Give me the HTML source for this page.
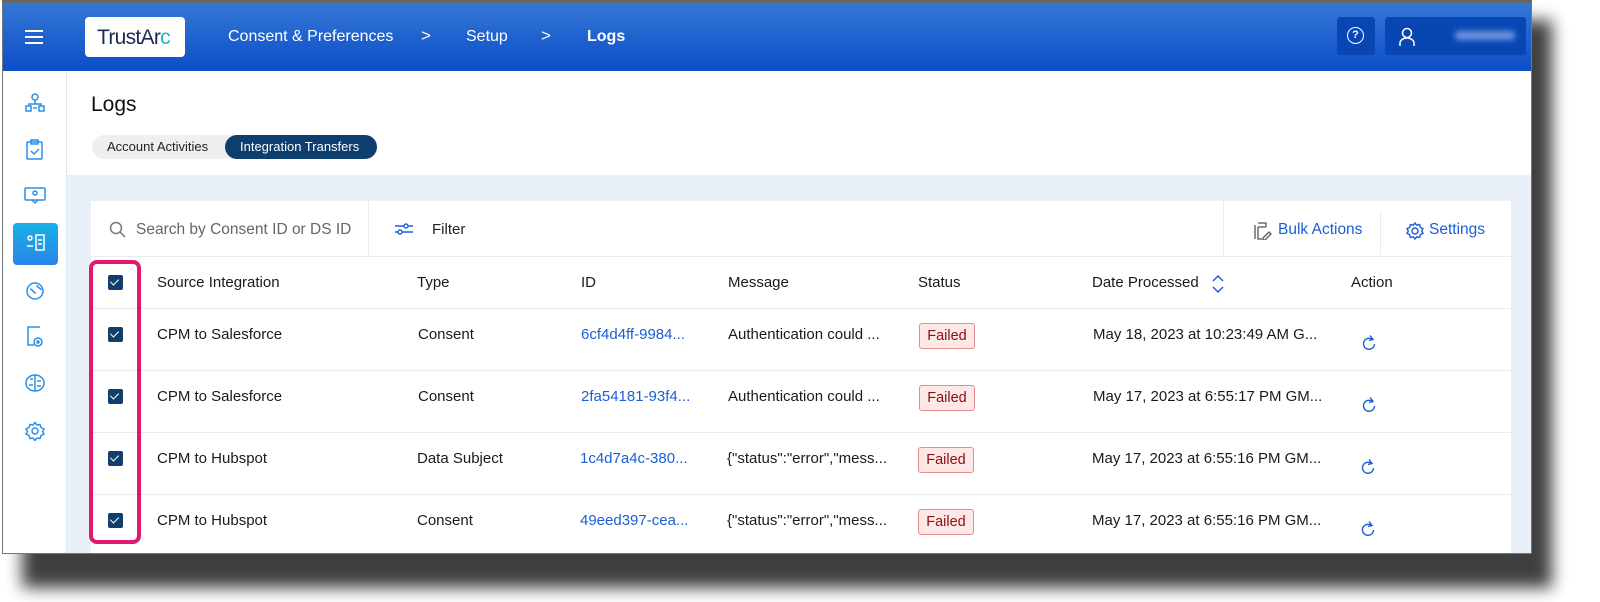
<!DOCTYPE html>
<html><head><style>
*{box-sizing:border-box;margin:0;padding:0}
body{width:1600px;height:602px;background:#fff;font-family:"Liberation Sans",sans-serif;position:relative;overflow:hidden;color:#1a1a1a}
.shadow{position:absolute;left:22px;top:20px;width:1530px;height:568px;background:#1e1e1e;filter:blur(8px);opacity:.85}
.win{position:absolute;left:2px;top:0;width:1530px;height:554px;background:#e9f0f8;overflow:hidden;border:1px solid #777;border-top:3px solid #666}
.hdr{position:absolute;left:0;top:0;width:100%;height:68px;background:linear-gradient(#3577d6,#0b4ec6)}
.t{position:absolute;white-space:nowrap}
.side{position:absolute;left:0;top:68px;width:64px;height:500px;background:#fff;border-right:1px solid #dde5ef}
.top{position:absolute;left:64px;top:68px;right:0;height:104px;background:#fff}
.card{position:absolute;left:88px;top:198px;width:1420px;height:400px;background:#fff}
.line{position:absolute;left:0;width:100%;height:1px;background:#e8ecf1}
.cb{position:absolute;width:15px;height:15px;background:#123e6b;border-radius:2px}
.cb:after{content:"";position:absolute;left:4px;top:2px;width:4px;height:7px;border:solid #fff;border-width:0 1.6px 1.6px 0;transform:rotate(45deg)}
.f{position:absolute;width:56px;height:26px;border:1px solid #e58b8b;background:#fde7e7;border-radius:3px;color:#8a1010;font-size:14.5px;text-align:center;line-height:24px}
.c{font-size:15px;color:#1a1a1a}
.ln{color:#1a5fd6}
.ic{position:absolute}
.rf{position:absolute}
</style></head><body>
<div class="shadow"></div>
<div class="win">
<div class="hdr">
 <div class="ic" style="left:22px;top:27px;width:18px;height:2px;background:#fff;box-shadow:0 6px #fff,0 12px #fff"></div>
 <div style="position:absolute;left:82px;top:14px;width:100px;height:40px;background:#fff;border-radius:4px"></div>
 <div class="t" style="left:94px;top:23px;font-size:21px;color:#1b2a55;letter-spacing:-.7px">TrustAr<span style="color:#1cb5c9">c</span></div>
 <div class="t" style="left:225px;top:25px;color:#fff;font-size:16px">Consent &amp; Preferences</div>
 <div class="t" style="left:418px;top:23px;color:#fff;font-size:17px">&gt;</div>
 <div class="t" style="left:463px;top:25px;color:#fff;font-size:16px">Setup</div>
 <div class="t" style="left:538px;top:23px;color:#fff;font-size:17px">&gt;</div>
 <div class="t" style="left:584px;top:25px;color:#fff;font-size:16px;font-weight:bold">Logs</div>
 <div style="position:absolute;left:1334px;top:14px;width:38px;height:38px;background:#0847b3;border-radius:3px"></div>
 <div style="position:absolute;left:1344px;top:24px;width:17px;height:17px;border:1.6px solid #fff;border-radius:50%;color:#fff;font-size:11px;text-align:center;line-height:14px;font-weight:bold">?</div>
 <div style="position:absolute;left:1382px;top:14px;width:141px;height:38px;background:#0847b3;border-radius:3px"></div>
 <svg class="ic" style="left:1395px;top:24px" width="18" height="20"><circle cx="9" cy="6" r="4.5" fill="none" stroke="#fff" stroke-width="1.5"/><path d="M2 19v-3a7 5 0 0 1 14 0v3" fill="none" stroke="#fff" stroke-width="1.5"/></svg>
 <div style="position:absolute;left:1452px;top:28px;width:60px;height:9px;background:#6c95e0;filter:blur(3px);border-radius:4px"></div>
</div>
<div class="side">
 <svg class="ic" style="left:22px;top:22px" width="20" height="20" fill="none" stroke="#2a8fe6" stroke-width="1.5"><circle cx="10" cy="4" r="3"/><rect x="1" y="13" width="5" height="5"/><rect x="14" y="13" width="5" height="5"/><path d="M10 7v4M4 13v-2h12v2M8 15h4"/></svg>
 <svg class="ic" style="left:22px;top:68px" width="20" height="22" fill="none" stroke="#2a8fe6" stroke-width="1.5"><rect x="2" y="3" width="15" height="17" rx="1"/><rect x="6" y="1" width="7" height="4"/><path d="M6 12l3 3 5-5"/></svg>
 <svg class="ic" style="left:21px;top:115px" width="22" height="20" fill="none" stroke="#2a8fe6" stroke-width="1.5"><rect x="1" y="2" width="20" height="12" rx="1"/><circle cx="11" cy="7" r="2"/><path d="M8 14l3 3 3-3"/></svg>
 <div style="position:absolute;left:10px;top:152px;width:45px;height:42px;background:linear-gradient(#18b0e6,#2a86e8);border-radius:4px"></div>
 <svg class="ic" style="left:23px;top:163px" width="20" height="18" fill="none" stroke="#fff" stroke-width="1.5"><circle cx="4" cy="4" r="2"/><path d="M1 12h6"/><rect x="10" y="1" width="8" height="15"/><path d="M12 6h4M12 10h4"/></svg>
 <svg class="ic" style="left:22px;top:210px" width="20" height="20" fill="none" stroke="#2a8fe6" stroke-width="1.5"><circle cx="10" cy="10" r="8"/><path d="M5 8c3 0 3 4 6 4M12 4c0 3 4 3 4 5"/></svg>
 <svg class="ic" style="left:23px;top:255px" width="18" height="22" fill="none" stroke="#2a8fe6" stroke-width="1.5"><path d="M14 1H2v18h6"/><circle cx="12" cy="16" r="4"/><circle cx="12" cy="16" r="1"/></svg>
 <svg class="ic" style="left:22px;top:302px" width="20" height="20" fill="none" stroke="#2a8fe6" stroke-width="1.5"><ellipse cx="10" cy="10" rx="9" ry="8"/><path d="M10 2v16M5 6h3M12 8h4M4 12h4M12 13h4"/></svg>
 <svg class="ic" style="left:22px;top:350px" width="20" height="20" fill="none" stroke="#2a8fe6" stroke-width="1.5"><circle cx="10" cy="10" r="3"/><path d="M10 1.5l2 2.5 3-.5 1 3 3 1.5-1.5 2.5 1.5 2.5-3 1.5-1 3-3-.5-2 2.5-2-2.5-3 .5-1-3-3-1.5 1.5-2.5-1.5-2.5 3-1.5 1-3 3 .5z"/></svg>
</div>
<div class="top">
 <div class="t" style="left:24px;top:22px;font-size:21px;color:#111">Logs</div>
 <div style="position:absolute;left:25px;top:64px;width:285px;height:24px;background:#efefef;border-radius:12px"></div>
 <div class="t" style="left:40px;top:68px;font-size:13px;color:#222">Account Activities</div>
 <div style="position:absolute;left:158px;top:64px;width:152px;height:24px;background:#0e3e6e;border-radius:12px"></div>
 <div class="t" style="left:173px;top:68px;font-size:13px;color:#fff">Integration Transfers</div>
</div>
<div class="card">
 <svg class="ic" style="left:18px;top:20px" width="18" height="18" fill="none" stroke="#777" stroke-width="1.5"><circle cx="7" cy="7" r="5.5"/><path d="M11 11l5 5"/></svg>
 <div class="t" style="left:45px;top:20px;font-size:15.5px;color:#666">Search by Consent ID or DS ID</div>
 <div style="position:absolute;left:277px;top:0;width:1px;height:55px;background:#e8ecf1"></div>
 <svg class="ic" style="left:304px;top:21px" width="18" height="14" fill="none" stroke="#1a5fd6" stroke-width="1.4"><path d="M0 4h18M0 10h18"/><circle cx="11" cy="4" r="2" fill="#fff"/><circle cx="5" cy="10" r="2" fill="#fff"/></svg>
 <div class="t" style="left:341px;top:20px;font-size:15px;color:#222">Filter</div>
 <div style="position:absolute;left:1132px;top:0;width:1px;height:55px;background:#e8ecf1"></div>
 <div style="position:absolute;left:1289px;top:10px;width:1px;height:44px;background:#e8ecf1"></div>
 <svg class="ic" style="left:1163px;top:21px" width="18" height="18" fill="none" stroke="#555" stroke-width="1.3"><path d="M1 3v14M4 1h8v4M4 5h8M4 5v12h4"/><path d="M9 16l6-6 2 2-6 6h-2z"/></svg>
 <div class="t ln" style="left:1187px;top:20px;font-size:15.5px">Bulk Actions</div>
 <svg class="ic" style="left:1315px;top:21px" width="18" height="18" fill="none" stroke="#1a5fd6" stroke-width="1.4"><circle cx="9" cy="9" r="3"/><path d="M9 1l1.8 2.2 2.8-.6.8 2.8 2.6 1.3-1.3 2.3 1.3 2.3-2.6 1.3-.8 2.8-2.8-.6L9 17l-1.8-2.2-2.8.6-.8-2.8-2.6-1.3L2.3 9 1 6.7l2.6-1.3.8-2.8 2.8.6z"/></svg>
 <div class="t ln" style="left:1338px;top:20px;font-size:15.5px">Settings</div>
 <div class="line" style="top:55px"></div>
 <div class="line" style="top:107px"></div>
 <div class="line" style="top:169px"></div>
 <div class="line" style="top:231px"></div>
 <div class="line" style="top:293px"></div>
 <div class="cb" style="left:17px;top:74px"></div>
 <div class="t c" style="left:66px;top:73px">Source Integration</div>
 <div class="t c" style="left:326px;top:73px">Type</div>
 <div class="t c" style="left:490px;top:73px">ID</div>
 <div class="t c" style="left:637px;top:73px">Message</div>
 <div class="t c" style="left:827px;top:73px">Status</div>
 <div class="t c" style="left:1001px;top:73px">Date Processed</div>
 <svg class="ic" style="left:1121px;top:73px" width="12" height="20" fill="none" stroke="#1a5fd6" stroke-width="1.5"><path d="M1 7l5-5 5 5M1 13l5 5 5-5"/></svg>
 <div class="t c" style="left:1260px;top:73px">Action</div>

 <div class="cb" style="left:17px;top:126px"></div>
 <div class="t c" style="left:66px;top:125px">CPM to Salesforce</div>
 <div class="t c" style="left:327px;top:125px">Consent</div>
 <div class="t c ln" style="left:490px;top:125px">6cf4d4ff-9984...</div>
 <div class="t c" style="left:637px;top:125px">Authentication could ...</div>
 <div class="f" style="left:828px;top:122px">Failed</div>
 <div class="t c" style="left:1002px;top:125px">May 18, 2023 at 10:23:49 AM G...</div>
 <svg class="rf" style="left:1271px;top:133px" width="14" height="17" fill="none" stroke="#1a5fd6" stroke-width="1.4"><path d="M11 6A5.5 5.5 0 1 0 12.5 10"/><path d="M8 1.5l3 4-4 1"/></svg>

 <div class="cb" style="left:17px;top:188px"></div>
 <div class="t c" style="left:66px;top:187px">CPM to Salesforce</div>
 <div class="t c" style="left:327px;top:187px">Consent</div>
 <div class="t c ln" style="left:490px;top:187px">2fa54181-93f4...</div>
 <div class="t c" style="left:637px;top:187px">Authentication could ...</div>
 <div class="f" style="left:828px;top:184px">Failed</div>
 <div class="t c" style="left:1002px;top:187px">May 17, 2023 at 6:55:17 PM GM...</div>
 <svg class="rf" style="left:1271px;top:195px" width="14" height="17" fill="none" stroke="#1a5fd6" stroke-width="1.4"><path d="M11 6A5.5 5.5 0 1 0 12.5 10"/><path d="M8 1.5l3 4-4 1"/></svg>

 <div class="cb" style="left:17px;top:250px"></div>
 <div class="t c" style="left:66px;top:249px">CPM to Hubspot</div>
 <div class="t c" style="left:326px;top:249px">Data Subject</div>
 <div class="t c ln" style="left:489px;top:249px">1c4d7a4c-380...</div>
 <div class="t c" style="left:636px;top:249px">{"status":"error","mess...</div>
 <div class="f" style="left:827px;top:246px">Failed</div>
 <div class="t c" style="left:1001px;top:249px">May 17, 2023 at 6:55:16 PM GM...</div>
 <svg class="rf" style="left:1270px;top:257px" width="14" height="17" fill="none" stroke="#1a5fd6" stroke-width="1.4"><path d="M11 6A5.5 5.5 0 1 0 12.5 10"/><path d="M8 1.5l3 4-4 1"/></svg>

 <div class="cb" style="left:17px;top:312px"></div>
 <div class="t c" style="left:66px;top:311px">CPM to Hubspot</div>
 <div class="t c" style="left:326px;top:311px">Consent</div>
 <div class="t c ln" style="left:489px;top:311px">49eed397-cea...</div>
 <div class="t c" style="left:636px;top:311px">{"status":"error","mess...</div>
 <div class="f" style="left:827px;top:308px">Failed</div>
 <div class="t c" style="left:1001px;top:311px">May 17, 2023 at 6:55:16 PM GM...</div>
 <svg class="rf" style="left:1270px;top:319px" width="14" height="17" fill="none" stroke="#1a5fd6" stroke-width="1.4"><path d="M11 6A5.5 5.5 0 1 0 12.5 10"/><path d="M8 1.5l3 4-4 1"/></svg>
</div>
<div style="position:absolute;left:86px;top:257px;width:52px;height:284px;border:4px solid #e0186f;border-radius:8px"></div>
</div>
</body></html>
